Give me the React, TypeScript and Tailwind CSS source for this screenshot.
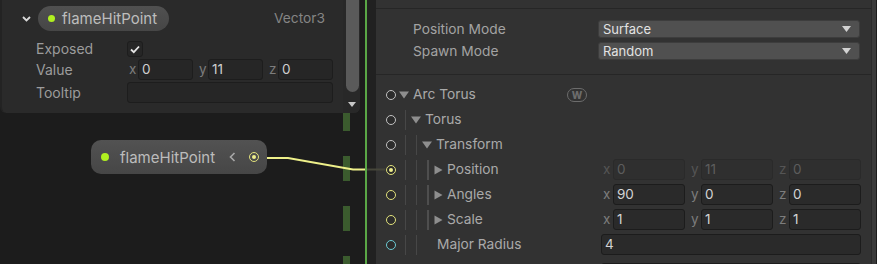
import React from "react";

type PortKind = "gray" | "yellow" | "yellowFilled" | "cyan";

function Port({ kind }: { kind: PortKind }) {
  const ring =
    kind === "gray"
      ? "border-[#c2c2c2]"
      : kind === "cyan"
      ? "border-[#6ccbd4]"
      : "border-[#e2e27c]";
  return (
    <div
      className={`w-[10px] h-[10px] rounded-full border-[1.5px] ${ring} bg-[#2c2c2c] flex items-center justify-center`}
    >
      {kind === "yellowFilled" && <div className="w-[4px] h-[4px] rounded-full bg-[#eded8c]" />}
    </div>
  );
}

function Guide({ wide, strong }: { wide?: boolean; strong?: boolean }) {
  return (
    <div className={`${wide ? "w-[12px]" : "w-[11px]"} h-[20px] flex justify-center shrink-0`}>
      <div className={`${strong ? "w-[2px] bg-[#4e4e4e]" : "w-px bg-[#474747]"} h-full`} />
    </div>
  );
}

function FoldDown() {
  return (
    <div className="w-[14px] shrink-0 flex items-center">
      <svg width="10" height="8" viewBox="0 0 10 8">
        <path d="M0 0.5 H10 L5 7.5 Z" fill="#8e8e8e" />
      </svg>
    </div>
  );
}

function FoldRight() {
  return (
    <div className="w-[14px] shrink-0 flex items-center pl-[1px]">
      <svg width="9" height="10" viewBox="0 0 9 10">
        <path d="M0.5 0.5 L8.5 5 L0.5 9.5 Z" fill="#8e8e8e" />
      </svg>
    </div>
  );
}

function Field({
  value,
  disabled,
  dark,
}: {
  value: string;
  disabled?: boolean;
  dark?: boolean;
}) {
  const tone = disabled
    ? "bg-[#2f2f2f] border-[#2a2a2a] text-[#5d5d5d]"
    : dark
    ? "bg-[#262626] border-[#1d1d1d] text-[#cfcfcf]"
    : "bg-[#2a2a2a] border-[#1c1c1c] text-[#d4d4d4]";
  return (
    <div
      className={`h-[21px] flex-1 min-w-0 rounded-[3px] border ${tone} flex items-center pl-[3px] text-[13.5px] leading-none`}
    >
      {value}
    </div>
  );
}

function Vec3({
  values,
  disabled,
  dark,
}: {
  values: [string, string, string];
  disabled?: boolean;
  dark?: boolean;
}) {
  const axes = ["x", "y", "z"];
  return (
    <div className="grid grid-cols-3 gap-x-[4px]">
      {axes.map((a, i) => (
        <div key={a} className="flex items-center">
          <span
            className={`${dark ? "w-[11px]" : "w-[12px]"} pl-[2px] text-[13.5px] leading-none ${
              disabled ? "text-[#555555]" : "text-[#7d7d7d]"
            }`}
          >
            {a}
          </span>
          <Field value={values[i]} disabled={disabled} dark={dark} />
        </div>
      ))}
    </div>
  );
}

function TreeRow({
  port,
  guides,
  fold,
  label,
  badge,
  children,
}: {
  port: PortKind;
  guides: React.ReactNode;
  fold: "down" | "right" | "none";
  label: string;
  badge?: boolean;
  children?: React.ReactNode;
}) {
  return (
    <div className="h-[25px] flex items-center">
      <div className="w-[225px] shrink-0 h-full flex items-center">
        <div className="w-[23px] pl-[10px] shrink-0 flex items-center">
          <Port kind={port} />
        </div>
        {guides}
        {fold === "down" ? <FoldDown /> : fold === "right" ? <FoldRight /> : <div className="w-[15px] shrink-0" />}
        <span className="flex-1 text-[13.75px] text-[#a9a9a9] leading-none">{label}</span>
        {badge && (
          <span className="mr-[14px] w-[20px] h-[14px] rounded-full border-[1.5px] border-[#6c6c6c] text-[#6c6c6c] text-[10px] font-extrabold flex items-center justify-center leading-none">
            W
          </span>
        )}
      </div>
      <div className="flex-1 pr-[10px]">{children}</div>
    </div>
  );
}

function Dropdown({ value }: { value: string }) {
  return (
    <div className="flex-1 h-[18px] rounded-[3px] bg-[#505050] border border-[#3d3d3d] flex items-center pl-[4px] pr-[8px] text-[13px] text-[#e2e2e2] leading-none">
      <span className="flex-1">{value}</span>
      <svg width="9" height="6" viewBox="0 0 9 6">
        <path d="M0 0 H9 L4.5 6 Z" fill="#d2d2d2" />
      </svg>
    </div>
  );
}

export default function App() {
  return (
    <div className="relative w-[877px] h-[264px] overflow-hidden flex bg-[#1c1c1c] font-['Inter','Noto_Sans',sans-serif]">
      {/* Graph canvas */}
      <div className="relative w-[376px] h-full shrink-0">
        {/* dashed group frame */}
        <div className="absolute left-[343px] top-[6px] w-[7px] h-[258px] bg-[repeating-linear-gradient(to_bottom,#3b5b2e_0px,#3b5b2e_25px,transparent_25px,transparent_50px)]" />
        {/* gap right of the line */}
        <div className="absolute left-[367px] top-0 w-[9px] h-full bg-[#212121]" />
        {/* green edge line */}
        <div className="absolute left-[365px] top-0 w-[2px] h-full bg-[#5aa746]" />

        {/* Parameter node */}
        <div className="absolute left-[91px] top-[140px] w-[176px] h-[34px] rounded-[10px] bg-linear-to-b from-[#525252] to-[#464646] flex items-center pl-[10px] pr-[8px]">
          <div className="w-[8px] h-[8px] rounded-full bg-[#b0f020] shrink-0" />
          <span className="ml-[11px] flex-1 text-[15px] text-[#bcbcbc] leading-none">flameHitPoint</span>
          <svg width="7" height="10" viewBox="0 0 7 10" className="shrink-0">
            <path d="M5.5 1 L1.5 5 L5.5 9" stroke="#a8a8a8" strokeWidth="1.6" fill="none" />
          </svg>
          <div className="ml-[13px] w-[10px] h-[10px] rounded-full border-[1.5px] border-[#e2e27c] flex items-center justify-center shrink-0">
            <div className="w-[4px] h-[4px] rounded-full bg-[#eded8c]" />
          </div>
        </div>

        {/* Blackboard panel */}
        <div className="absolute left-0 top-0 w-[360px] h-[113px] bg-[#2a2a2a] rounded-b-[6px] overflow-hidden flex border-l-2 border-[#232323]">
          <div className="w-[341px] shrink-0 pt-[6px]">
            <div className="h-[25px] flex items-center pl-[20px]">
              <svg width="9" height="6" viewBox="0 0 9 6" className="shrink-0">
                <path d="M1 1 L4.5 4.5 L8 1" stroke="#dadada" strokeWidth="1.8" fill="none" />
              </svg>
              <div className="ml-[7px] w-[131px] h-[25px] rounded-full bg-linear-to-b from-[#505050] to-[#464646] flex items-center pl-[10px] shrink-0">
                <div className="w-[7px] h-[7px] rounded-full bg-[#b0f020]" />
                <span className="ml-[7px] text-[15px] text-[#bdbdbd] leading-none">flameHitPoint</span>
              </div>
              <span className="flex-1 text-right mr-[18px] text-[13.75px] text-[#858585] leading-none">Vector3</span>
            </div>
            <div className="mt-[7px] h-[21px] flex items-center">
              <span className="w-[125px] pl-[34px] pt-[1px] text-[14px] text-[#9c9c9c] leading-none">Exposed</span>
              <div className="w-[16px] h-[16px] rounded-[3px] bg-[#262626] border border-[#1d1d1d] flex items-center justify-center">
                <svg width="14" height="14" viewBox="0 0 14 14">
                  <path d="M3 7.5 L5.8 10.2 L11 4.5" stroke="#e4e4e4" strokeWidth="1.8" fill="none" />
                </svg>
              </div>
            </div>
            <div className="h-[21px] flex items-center">
              <span className="w-[125px] pl-[34px] pt-[1px] text-[14px] text-[#9c9c9c] leading-none">Value</span>
              <div className="w-[206px]">
                <Vec3 values={["0", "11", "0"]} dark />
              </div>
            </div>
            <div className="mt-[2px] h-[21px] flex items-center">
              <span className="w-[125px] pl-[34px] pt-[1px] text-[14px] text-[#9c9c9c] leading-none">Tooltip</span>
              <div className="w-[206px] flex">
                <Field value="" dark />
              </div>
            </div>
          </div>
          <div className="w-[17px] shrink-0 bg-[#282828] flex flex-col">
            <div className="ml-[3px] w-[13px] h-[92px] rounded-b-[7px] bg-[#5a5a5a]" />
            <div className="mt-[10px] flex justify-center">
              <svg width="8" height="5" viewBox="0 0 8 5">
                <path d="M0 0 H8 L4 5 Z" fill="#c8c8c8" />
              </svg>
            </div>
          </div>
        </div>
      </div>

      {/* Inspector */}
      <div className="w-[496px] shrink-0 h-full bg-[#323232] border-r border-[#2a2a2a] flex flex-col">
        <div className="h-[9px] shrink-0 border-b border-[#262626]" />
        <div className="shrink-0 pt-[11px] pb-[14px] border-b border-[#262626] flex flex-col gap-[4px] pl-[37px] pr-[11px]">
          <div className="h-[18px] flex items-center">
            <span className="w-[185px] pt-[1px] text-[13.75px] text-[#a3a3a3] leading-none">Position Mode</span>
            <Dropdown value="Surface" />
          </div>
          <div className="h-[18px] flex items-center">
            <span className="w-[185px] pt-[1px] text-[13.75px] text-[#a3a3a3] leading-none">Spawn Mode</span>
            <Dropdown value="Random" />
          </div>
        </div>
        <div className="pt-[7px] flex flex-col">
          <TreeRow port="gray" guides={null} fold="down" label="Arc Torus" badge />
          <TreeRow port="gray" guides={<Guide wide />} fold="down" label="Torus" />
          <TreeRow port="gray" guides={<><Guide wide /><Guide /></>} fold="down" label="Transform" />
          <TreeRow port="yellowFilled" guides={<><Guide wide /><Guide /><Guide strong /></>} fold="right" label="Position">
            <Vec3 values={["0", "11", "0"]} disabled />
          </TreeRow>
          <TreeRow port="yellow" guides={<><Guide wide /><Guide /><Guide strong /></>} fold="right" label="Angles">
            <Vec3 values={["90", "0", "0"]} />
          </TreeRow>
          <TreeRow port="yellow" guides={<><Guide wide /><Guide /><Guide strong /></>} fold="right" label="Scale">
            <Vec3 values={["1", "1", "1"]} />
          </TreeRow>
          <TreeRow port="cyan" guides={<><Guide wide /><Guide /></>} fold="none" label="Major Radius">
            <div className="flex">
              <Field value="4" />
            </div>
          </TreeRow>
          <div className="mt-[4px] h-[25px] flex items-center">
            <div className="w-[225px] shrink-0" />
            <div className="flex-1 pr-[10px] flex">
              <div className="h-[21px] flex-1 rounded-[3px] border bg-[#2a2a2a] border-[#1c1c1c]" />
            </div>
          </div>
        </div>
      </div>
      <div className="w-[4px] shrink-0 h-full bg-[#3a3a3a]" />

      {/* wire */}
      <svg className="absolute left-0 top-0 pointer-events-none" width="877" height="264" viewBox="0 0 877 264">
        <path d="M267 158 L288 158 L353 169.5 L365 169.5" stroke="#eef08a" strokeWidth="2" fill="none" />
        <path d="M367 169.5 L385 169.5" stroke="#46463a" strokeWidth="2" fill="none" />
      </svg>
    </div>
  );
}
